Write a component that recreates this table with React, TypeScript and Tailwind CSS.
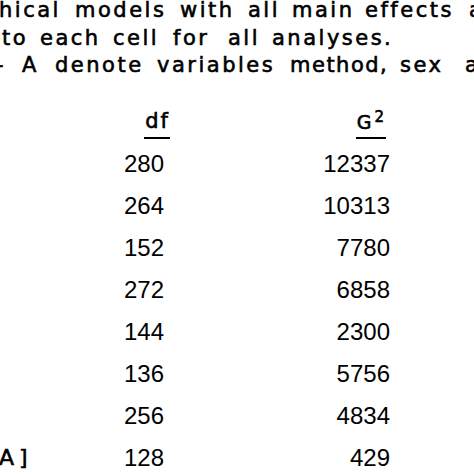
const type = "font-['DejaVu_Sans',Verdana,sans-serif] [-webkit-text-stroke:0.6px_black]";
const sans = "font-['Liberation_Sans',Arial,sans-serif]";

type Word = { text: string; w?: number; tight?: boolean };

const lines: { pl: number; words: Word[] }[] = [
  {
    pl: -1,
    words: [
      { text: "hical", w: 76 },
      { text: "models", w: 105 },
      { text: "with", w: 68 },
      { text: "all", w: 44 },
      { text: "main", w: 73 },
      { text: "effects", w: 104 },
      { text: "a" },
    ],
  },
  {
    pl: 2,
    words: [
      { text: "to", w: 38 },
      { text: "each", w: 73 },
      { text: "cell", w: 60 },
      { text: "for", w: 55 },
      { text: "all", w: 44 },
      { text: "analyses." },
    ],
  },
  {
    pl: -4,
    words: [
      { text: "-", w: 26 },
      { text: "A", w: 33 },
      { text: "denote", w: 102 },
      { text: "variables", w: 133 },
      { text: "method,", w: 110, tight: true },
      { text: "sex", w: 65 },
      { text: "a" },
    ],
  },
];

const rows = [
  { label: "", df: "280", g2: "12337" },
  { label: "", df: "264", g2: "10313" },
  { label: "", df: "152", g2: "7780" },
  { label: "", df: "272", g2: "6858" },
  { label: "", df: "144", g2: "2300" },
  { label: "", df: "136", g2: "5756" },
  { label: "", df: "256", g2: "4834" },
  { label: "A ]", df: "128", g2: "429" },
];

export default function App() {
  return (
    <div className="w-[474px] h-[474px] overflow-hidden bg-white text-black">
      <div className={`${type} text-[21px] leading-[27.5px] tracking-[2.5px] -mt-[3px]`}>
        {lines.map((line, i) => (
          <div key={i} className="flex whitespace-pre" style={{ marginLeft: line.pl }}>
            {line.words.map((wd, j) => (
              <span
                key={j}
                className={wd.tight ? "shrink-0 tracking-[1.5px]" : "shrink-0"}
                style={wd.w ? { width: wd.w } : undefined}
              >
                {wd.text}
              </span>
            ))}
          </div>
        ))}
      </div>

      <div className="flex items-end h-[63px] pb-[4px]">
        <div className="w-[40px]" />
        <div className="w-[125px] flex justify-end">
          <span className={`${type} text-[21px] leading-none tracking-[2px] pl-[1px] pb-[5px] border-b-2 border-black -mr-[5px]`}>
            df
          </span>
        </div>
        <div className="w-[226px] flex justify-end">
          <span className={`${type} text-[19px] leading-none pl-[1px] pr-[2px] pb-[5px] border-b-2 border-black mr-[5px] flex items-end`}>
            <span>G</span>
            <span className="text-[15px] leading-none relative -top-[7px] ml-[3px]">2</span>
          </span>
        </div>
      </div>

      <div className="flex flex-col">
        {rows.map((r, i) => (
          <div key={i} className={`flex h-[42px] items-center ${sans} text-[24px] leading-[42px]`}>
            <div className={`w-[40px] ${type} text-[22px] whitespace-pre tracking-[-1px] -ml-[1px]`}>{r.label}</div>
            <div className="w-[125px] text-right">{r.df}</div>
            <div className="w-[226px] text-right">{r.g2}</div>
          </div>
        ))}
      </div>
    </div>
  );
}
